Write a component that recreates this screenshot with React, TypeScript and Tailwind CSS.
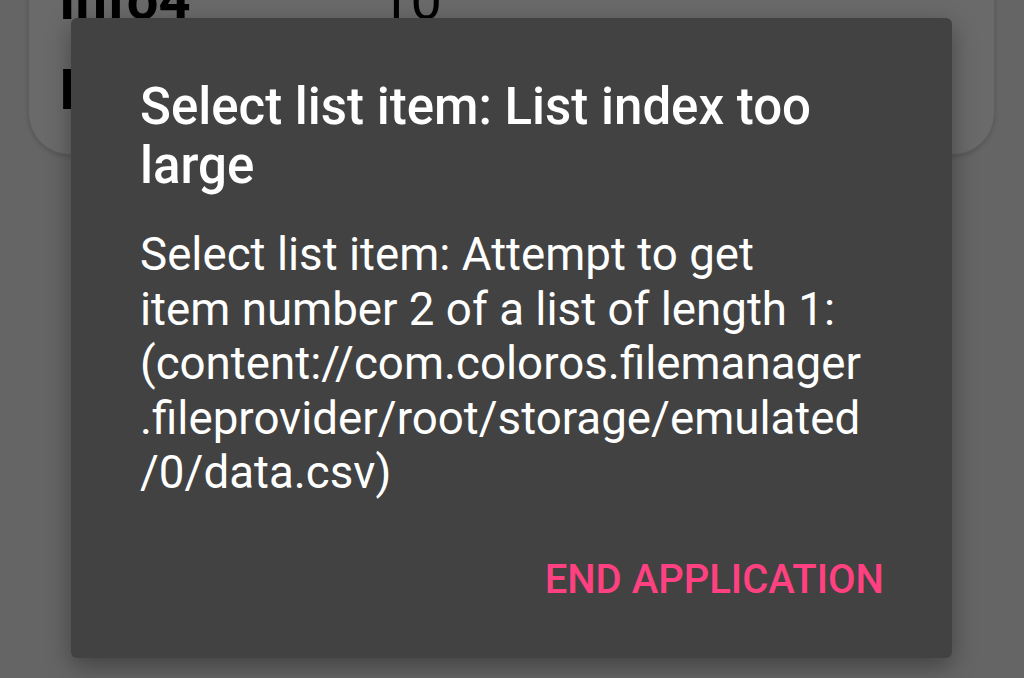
import React from "react";

export default function App() {
  const font = { fontFamily: "Roboto, 'Noto Sans', sans-serif" };
  return (
    <div
      className="relative w-[1024px] h-[678px] overflow-hidden bg-[#656565]"
      style={font}
    >
      {/* background card (behind scrim) */}
      <div className="ml-[28px] mt-[-60px] w-[967px] h-[215px] rounded-b-[42px] bg-[#6a6a6a] border border-[#5e5e5e] border-t-0 shadow-[0_2px_4px_rgba(0,0,0,0.15)]">
        <div className="pl-[30px] pt-[28px] flex flex-col gap-[26px]">
          <div className="flex items-baseline h-[64px]">
            <span className="w-[320px] text-[56px] font-bold leading-[64px] text-black">Info4</span>
            <span className="text-[56px] leading-[64px] text-black">10</span>
          </div>
          <div className="flex items-baseline h-[64px]">
            <span className="w-[320px] text-[56px] font-bold leading-[64px] text-black">Info5</span>
            <span className="text-[56px] leading-[64px] text-black">20</span>
          </div>
        </div>
      </div>

      {/* dialog */}
      <div className="absolute left-[71px] top-[18px] w-[881px] h-[640px] rounded-[6px] bg-[#424242] shadow-[0_8px_24px_rgba(0,0,0,0.35)] flex flex-col pl-[69px] pr-[68px] pt-[59px]">
        <div className="text-white text-[51px] font-medium leading-[59px] whitespace-nowrap">
          <div>Select list item: List index too</div>
          <div>large</div>
        </div>
        <div className="mt-[33px] text-white text-[45.7px] leading-[54.5px] whitespace-nowrap">
          <div>Select list item: Attempt to get</div>
          <div>item number 2 of a list of length 1:</div>
          <div>(content://com.coloros.filemanager</div>
          <div>.fileprovider/root/storage/emulated</div>
          <div>/0/data.csv)</div>
        </div>
        <div className="mt-[55px] flex justify-end">
          <span className="text-[#ff4081] text-[40px] font-medium leading-[48px] whitespace-nowrap">
            END APPLICATION
          </span>
        </div>
      </div>
    </div>
  );
}
